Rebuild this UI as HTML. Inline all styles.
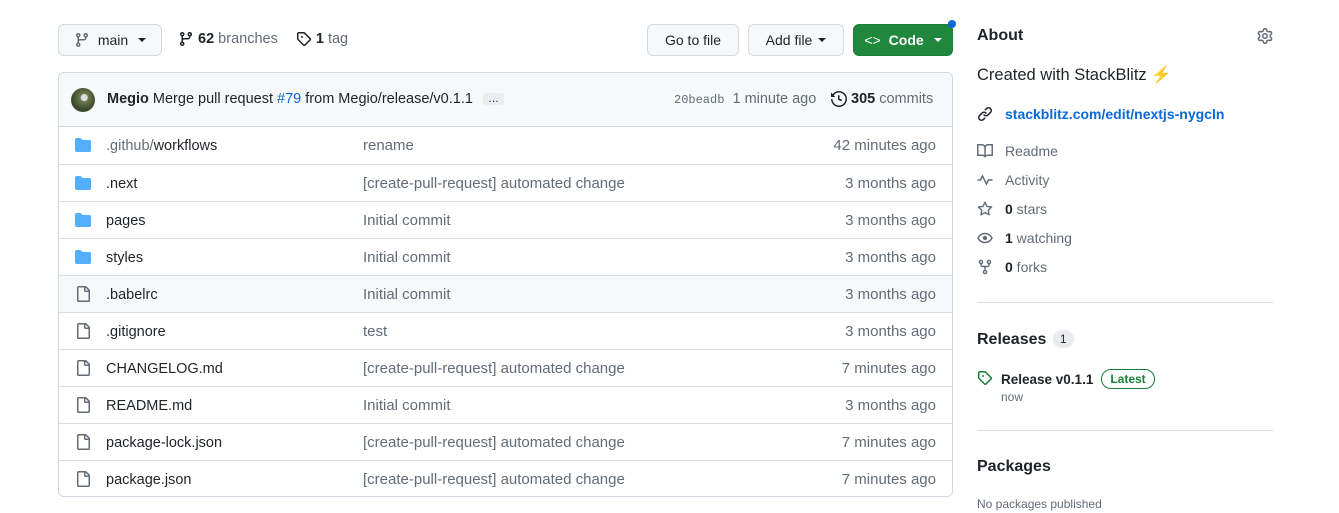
<!DOCTYPE html>
<html><head><style>
*{box-sizing:border-box;margin:0;padding:0}
body{width:1339px;height:513px;background:#fff;font-family:"Liberation Sans",sans-serif;font-size:14px;color:#1f2328;position:relative;overflow:hidden}
.abs{position:absolute}
.btn{position:absolute;top:24px;height:32px;border:1px solid #d5d8dc;border-radius:6px;background:#f6f8fa;display:flex;align-items:center;justify-content:center;font-size:14px;color:#1f2328}
.caret{display:inline-block;width:0;height:0;border-left:4px solid transparent;border-right:4px solid transparent;border-top:4px solid currentColor;margin-left:6px}
.box{position:absolute;left:58px;top:72px;width:895px;height:425px;border:1px solid #d0d7de;border-radius:6px;overflow:hidden}
.hdr{height:54px;background:#f6f8fa;border-bottom:1px solid #d0d7de;position:relative;font-size:14.5px}
.row{height:37px;border-top:1px solid #d8dee4;position:relative;font-size:14.5px}
.row .ic{position:absolute;left:16px;top:10px}
.row .n,.row .m,.row .t{position:absolute;top:10px;line-height:18px}
.row .n{left:47px}
.row .m{left:304px;color:#636c76;font-size:15px}
.row .t{right:16px;color:#636c76;font-size:15px}
.side{position:absolute;left:977px;width:296px}
.g{color:#636c76}
.li{position:absolute;left:977px;display:flex;align-items:center;color:#636c76;font-size:14px}
.li svg{margin-right:12px}
</style></head><body>
<div class="btn" style="left:58px;width:104px"><svg width="16" height="16" viewBox="0 0 16 16" fill="#636c76" style="margin-right:8px"><path d="M9.5 3.25a2.25 2.25 0 1 1 3 2.12V6A2.5 2.5 0 0 1 10 8.5H6a1 1 0 0 0-1 1v1.13a2.25 2.25 0 1 1-1.5 0V5.37a2.25 2.25 0 1 1 1.5 0v1.84A2.5 2.5 0 0 1 6 7h4a1 1 0 0 0 1-1v-.63a2.25 2.25 0 0 1-1.5-2.12ZM4.25 12a.75.75 0 1 0 0 1.5.75.75 0 0 0 0-1.5ZM3.5 3.25a.75.75 0 1 0 1.5 0 .75.75 0 0 0-1.5 0Zm8.25-.75a.75.75 0 1 0 0 1.5.75.75 0 0 0 0-1.5Z"/></svg><b style="font-weight:normal">main</b><span class="caret" style="margin-left:10px"></span></div>
<div class="abs" style="left:178px;top:31px;display:flex;align-items:center;font-size:14.5px"><svg width="16" height="16" viewBox="0 0 16 16" fill="#1f2328" style="margin-right:4px"><path d="M9.5 3.25a2.25 2.25 0 1 1 3 2.12V6A2.5 2.5 0 0 1 10 8.5H6a1 1 0 0 0-1 1v1.13a2.25 2.25 0 1 1-1.5 0V5.37a2.25 2.25 0 1 1 1.5 0v1.84A2.5 2.5 0 0 1 6 7h4a1 1 0 0 0 1-1v-.63a2.25 2.25 0 0 1-1.5-2.12ZM4.25 12a.75.75 0 1 0 0 1.5.75.75 0 0 0 0-1.5ZM3.5 3.25a.75.75 0 1 0 1.5 0 .75.75 0 0 0-1.5 0Zm8.25-.75a.75.75 0 1 0 0 1.5.75.75 0 0 0 0-1.5Z"/></svg><b>62</b>&nbsp;<span class="g">branches</span>
<svg width="16" height="16" viewBox="0 0 16 16" fill="#1f2328" style="margin:0 4px 0 18px"><path d="M1 7.78V2.75C1 1.78 1.78 1 2.75 1h5.03c.46 0 .91.18 1.24.51l5.5 5.5a1.75 1.75 0 0 1 0 2.48l-5.03 5.03a1.75 1.75 0 0 1-2.48 0l-5.5-5.5A1.75 1.75 0 0 1 1 7.78Zm1.5 0c0 .07.03.13.07.18l5.5 5.5c.1.1.26.1.36 0l5.03-5.03a.25.25 0 0 0 0-.36l-5.5-5.5a.25.25 0 0 0-.18-.07H2.75a.25.25 0 0 0-.25.25ZM6 5a1 1 0 1 1 0 2 1 1 0 0 1 0-2Z"/></svg><b>1</b>&nbsp;<span class="g">tag</span></div>
<div class="btn" style="left:647px;width:92px">Go to file</div>
<div class="btn" style="left:748px;width:96px">Add file<span class="caret"></span></div>
<div class="btn" style="left:853px;width:100px;background:#1f883d;border-color:#1a7f37;color:#fff;font-weight:bold"><span style="font-weight:normal;margin-right:8px">&lt;&gt;</span>Code<span class="caret" style="margin-left:10px"></span></div>
<div class="abs" style="left:948px;top:20px;width:8px;height:8px;border-radius:50%;background:#0969da"></div>

<div class="box">
<div class="hdr">
<div class="abs" style="left:12px;top:15px;width:24px;height:24px;border-radius:50%;background:radial-gradient(circle at 55% 40%,#ddd 0 3px,#6b7a4e 4px,#3c4a2c 12px)"></div>
<div class="abs" style="left:48px;top:18px"><b>Megio</b> Merge pull request <span style="color:#0969da">#79</span> from Megio/release/v0.1.1 <span style="display:inline-block;background:#eaeef2;border-radius:3px;padding:0 5px;font-size:11px;line-height:12px;margin-left:6px;vertical-align:middle">…</span></div>
<div class="abs" style="left:615px;top:18px;color:#636c76"><span style="font-family:'Liberation Mono',monospace;font-size:12px">20beadb</span>&nbsp; 1 minute ago</div>
<div class="abs" style="left:772px;top:18px;display:flex;align-items:center"><svg width="16" height="16" viewBox="0 0 16 16" fill="#1f2328" style="margin-right:4px"><path d="m.427 1.927 1.215 1.215a8.002 8.002 0 1 1-1.6 5.685.75.75 0 1 1 1.493-.154 6.5 6.5 0 1 0 1.18-4.458l1.358 1.358A.25.25 0 0 1 3.896 6H.25A.25.25 0 0 1 0 5.75V2.104a.25.25 0 0 1 .427-.177ZM7.75 4a.75.75 0 0 1 .75.75v2.992l2.028.812a.75.75 0 0 1-.557 1.392l-2.5-1A.751.751 0 0 1 7 8.25v-3.5A.75.75 0 0 1 7.75 4Z"/></svg><b>305</b>&nbsp;<span class="g">commits</span></div>
</div>
<div id="rows"></div>
</div>

<div class="side" style="top:27px;font-size:16px;font-weight:bold">About</div>
<svg class="abs" style="left:1257px;top:28px" width="16" height="16" viewBox="0 0 16 16" fill="#636c76"><path d="M8 0a8.2 8.2 0 0 1 .701.031C9.444.095 9.99.645 10.16 1.29l.288 1.107c.018.066.079.158.212.224.231.114.454.243.668.386.123.082.233.09.299.071l1.103-.303c.644-.176 1.392.021 1.82.63.27.385.506.792.704 1.218.315.675.111 1.422-.364 1.891l-.814.806c-.049.048-.098.147-.088.294.016.257.016.515 0 .772-.01.147.038.246.088.294l.814.806c.475.469.679 1.216.364 1.891a7.977 7.977 0 0 1-.704 1.217c-.428.61-1.176.807-1.82.63l-1.102-.302c-.067-.019-.177-.011-.3.071a5.909 5.909 0 0 1-.668.386c-.133.066-.194.158-.211.224l-.29 1.106c-.168.646-.715 1.196-1.458 1.26a8.006 8.006 0 0 1-1.402 0c-.743-.064-1.289-.614-1.458-1.26l-.289-1.106c-.018-.066-.079-.158-.212-.224a5.738 5.738 0 0 1-.668-.386c-.123-.082-.233-.09-.299-.071l-1.103.303c-.644.176-1.392-.021-1.82-.63a8.12 8.12 0 0 1-.704-1.218c-.315-.675-.111-1.422.363-1.891l.815-.806c.05-.048.098-.147.088-.294a6.214 6.214 0 0 1 0-.772c.01-.147-.038-.246-.088-.294l-.815-.806C.635 6.045.431 5.298.746 4.623a7.92 7.92 0 0 1 .704-1.217c.428-.61 1.176-.807 1.82-.63l1.102.302c.067.019.177.011.3-.071.214-.143.437-.272.668-.386.133-.066.194-.158.211-.224l.29-1.106C6.009.645 6.556.095 7.299.03 7.53.01 7.764 0 8 0Zm-.571 1.525c-.036.003-.108.036-.137.146l-.289 1.105c-.147.561-.549.967-.998 1.189-.173.086-.34.183-.5.29-.417.278-.97.423-1.529.27l-1.103-.303c-.109-.03-.175.016-.195.045-.22.312-.412.644-.573.99-.014.031-.021.11.059.19l.815.806c.411.406.562.957.53 1.456a4.709 4.709 0 0 0 0 .582c.032.499-.119 1.05-.53 1.456l-.815.806c-.081.08-.073.159-.059.19.162.346.353.677.573.989.02.03.085.076.195.046l1.102-.303c.56-.153 1.113-.008 1.53.27.161.107.328.204.501.29.447.222.85.629.997 1.189l.289 1.105c.029.109.101.143.137.146a6.6 6.6 0 0 0 1.142 0c.036-.003.108-.036.137-.146l.289-1.105c.147-.561.549-.967.998-1.189.173-.086.34-.183.5-.29.417-.278.97-.423 1.529-.27l1.103.303c.109.029.175-.016.195-.045.22-.313.411-.644.573-.99.014-.031.021-.11-.059-.19l-.815-.806c-.411-.406-.562-.957-.53-1.456a4.709 4.709 0 0 0 0-.582c-.032-.499.119-1.05.53-1.456l.815-.806c.081-.08.073-.159.059-.19a6.464 6.464 0 0 0-.573-.989c-.02-.03-.085-.076-.195-.046l-1.102.303c-.56.153-1.113.008-1.53-.27a4.44 4.44 0 0 0-.501-.29c-.447-.222-.85-.629-.997-1.189l-.289-1.105c-.029-.11-.101-.143-.137-.146a6.6 6.6 0 0 0-1.142 0ZM11 8a3 3 0 1 1-6 0 3 3 0 0 1 6 0ZM9.5 8a1.5 1.5 0 1 0-3.001.001A1.5 1.5 0 0 0 9.5 8Z"/></svg>
<div class="side" style="top:66px;font-size:16.5px">Created with StackBlitz <span style="color:#f5a623">⚡</span></div>
<div class="li" style="top:106px;color:#0969da;font-weight:bold"><svg width="16" height="16" viewBox="0 0 16 16" fill="#1f2328"><path d="m7.775 3.275 1.25-1.25a3.5 3.5 0 1 1 4.95 4.95l-2.5 2.5a3.5 3.5 0 0 1-4.95 0 .751.751 0 0 1 .018-1.042.751.751 0 0 1 1.042-.018 1.998 1.998 0 0 0 2.83 0l2.5-2.5a2.002 2.002 0 0 0-2.83-2.83l-1.25 1.25a.751.751 0 0 1-1.042-.018.751.751 0 0 1-.018-1.042Zm-4.69 9.64a1.998 1.998 0 0 0 2.83 0l1.25-1.25a.751.751 0 0 1 1.042.018.751.751 0 0 1 .018 1.042l-1.25 1.25a3.5 3.5 0 1 1-4.95-4.950l2.5-2.5a3.5 3.5 0 0 1 4.95 0 .751.751 0 0 1-.018 1.042.751.751 0 0 1-1.042.018 1.998 1.998 0 0 0-2.83 0l-2.5 2.5a1.998 1.998 0 0 0 0 2.83Z"/></svg>stackblitz.com/edit/nextjs-nygcln</div>
<div class="li" style="top:143px"><svg width="16" height="16" viewBox="0 0 16 16" fill="#636c76"><path d="M0 1.75A.75.75 0 0 1 .75 1h4.253c1.227 0 2.317.59 3 1.501A3.743 3.743 0 0 1 11.006 1h4.245a.75.75 0 0 1 .75.75v10.5a.75.75 0 0 1-.75.75h-4.507a2.25 2.25 0 0 0-1.591.659l-.622.621a.75.75 0 0 1-1.060 0l-.622-.621A2.25 2.25 0 0 0 5.258 13H.75a.75.75 0 0 1-.75-.75Zm7.251 10.324.004-5.073-.002-2.253A2.25 2.25 0 0 0 5.003 2.5H1.5v9h3.757a3.75 3.75 0 0 1 1.994.574ZM8.755 4.75l-.004 7.322a3.752 3.752 0 0 1 1.992-.572H14.5v-9h-3.495a2.25 2.25 0 0 0-2.25 2.25Z"/></svg>Readme</div>
<div class="li" style="top:172px"><svg width="16" height="16" viewBox="0 0 16 16" fill="none" stroke="#636c76" stroke-width="1.5"><path d="M0.5 8h3l2-4 4 8 2-4h4"/></svg>Activity</div>
<div class="li" style="top:201px"><svg width="16" height="16" viewBox="0 0 16 16" fill="none" stroke="#636c76" stroke-width="1.4" stroke-linejoin="round"><path d="M8 1.2l2 4.2 4.6.6-3.4 3.2.9 4.6L8 11.5l-4.1 2.3.9-4.6L1.4 6l4.6-.6z"/></svg><b style="color:#1f2328">0</b>&nbsp;stars</div>
<div class="li" style="top:230px"><svg width="16" height="16" viewBox="0 0 16 16" fill="none" stroke="#636c76" stroke-width="1.4"><path d="M1 8c1.5-3 4-4.5 7-4.5S13.5 5 15 8c-1.5 3-4 4.5-7 4.5S2.5 11 1 8z"/><circle cx="8" cy="8" r="1.5" fill="#636c76"/></svg><b style="color:#1f2328">1</b>&nbsp;watching</div>
<div class="li" style="top:259px"><svg width="16" height="16" viewBox="0 0 16 16" fill="none" stroke="#636c76" stroke-width="1.4"><circle cx="4" cy="3" r="1.6"/><circle cx="12" cy="3" r="1.6"/><circle cx="8" cy="13" r="1.6"/><path d="M4 4.6V6a1.5 1.5 0 0 0 1.5 1.5h5A1.5 1.5 0 0 0 12 6V4.6M8 7.5v3.9"/></svg><b style="color:#1f2328">0</b>&nbsp;forks</div>
<div class="abs" style="left:977px;top:302px;width:296px;border-top:1px solid #d8dee4"></div>
<div class="side" style="top:330px;font-size:16px;font-weight:bold">Releases <span style="display:inline-block;background:#e9ebee;border-radius:10px;font-size:12px;font-weight:normal;padding:2px 7px;margin-left:2px;vertical-align:1px">1</span></div>
<svg class="abs" style="left:977px;top:370px" width="16" height="16" viewBox="0 0 16 16" fill="#1a7f37"><path d="M1 7.78V2.75C1 1.78 1.78 1 2.75 1h5.03c.46 0 .91.18 1.24.51l5.5 5.5a1.75 1.75 0 0 1 0 2.48l-5.03 5.03a1.75 1.75 0 0 1-2.48 0l-5.5-5.5A1.75 1.75 0 0 1 1 7.78Zm1.5 0c0 .07.03.13.07.18l5.5 5.5c.1.1.26.1.36 0l5.03-5.03a.25.25 0 0 0 0-.36l-5.5-5.5a.25.25 0 0 0-.18-.07H2.75a.25.25 0 0 0-.25.25ZM6 5a1 1 0 1 1 0 2 1 1 0 0 1 0-2Z"/></svg>
<div class="abs" style="left:1001px;top:369px;font-weight:bold;display:flex;align-items:center;font-size:13.5px">Release v0.1.1<span style="margin-left:8px;border:1px solid #1a7f37;color:#1a7f37;border-radius:12px;font-size:12px;padding:2px 8px;font-weight:bold">Latest</span></div>
<div class="abs g" style="left:1001px;top:390px;font-size:12px">now</div>
<div class="abs" style="left:977px;top:430px;width:296px;border-top:1px solid #d8dee4"></div>
<div class="side" style="top:458px;font-size:16px;font-weight:bold">Packages</div>
<div class="side g" style="top:497px;font-size:12px">No packages published</div>

<script>
var F='<svg width="16" height="16" viewBox="0 0 16 16" fill="#54aeff"><path d="M1.75 1A1.75 1.75 0 0 0 0 2.75v10.5C0 14.216.784 15 1.75 15h12.5A1.75 1.75 0 0 0 16 13.25v-8.5A1.75 1.75 0 0 0 14.25 3H7.5a.25.25 0 0 1-.2-.1l-.9-1.2C6.07 1.26 5.55 1 5 1H1.75Z"/></svg>';
var D='<svg width="16" height="16" viewBox="0 0 16 16" fill="#636c76"><path d="M2 1.75C2 .784 2.784 0 3.75 0h6.586c.464 0 .909.184 1.237.513l2.914 2.914c.329.328.513.773.513 1.237v9.586A1.75 1.75 0 0 1 13.25 16h-9.5A1.75 1.75 0 0 1 2 14.25Zm1.75-.25a.25.25 0 0 0-.25.25v12.5c0 .138.112.25.25.25h9.5a.25.25 0 0 0 .25-.25V6h-2.75A1.75 1.75 0 0 1 9 4.25V1.5Zm6.75.062V4.25c0 .138.112.25.25.25h2.688l-.011-.013-2.914-2.914-.013-.011Z"/></svg>';
var C='[create-pull-request] automated change',I='Initial commit';
var r=[[F,'.github/<span>workflows</span>','rename','42 minutes ago'],[F,'.next',C,'3 months ago'],[F,'pages',I,'3 months ago'],[F,'styles',I,'3 months ago'],[D,'.babelrc',I,'3 months ago',1],[D,'.gitignore','test','3 months ago'],[D,'CHANGELOG.md',C,'7 minutes ago'],[D,'README.md',I,'3 months ago'],[D,'package-lock.json',C,'7 minutes ago'],[D,'package.json',C,'7 minutes ago']];
var h='';r.forEach(function(x,i){h+='<div class="row" style="'+(i==0?'border-top:none;':'')+(x[4]?'background:#f6f8fa':'')+'"><span class="ic">'+x[0]+'</span><span class="n" style="'+(i==0?'color:#636c76':'')+'">'+x[1].replace('<span>','<span style="color:#1f2328">')+'</span><span class="m">'+x[2]+'</span><span class="t">'+x[3]+'</span></div>'});
document.getElementById('rows').innerHTML=h;
</script>
</body></html>
